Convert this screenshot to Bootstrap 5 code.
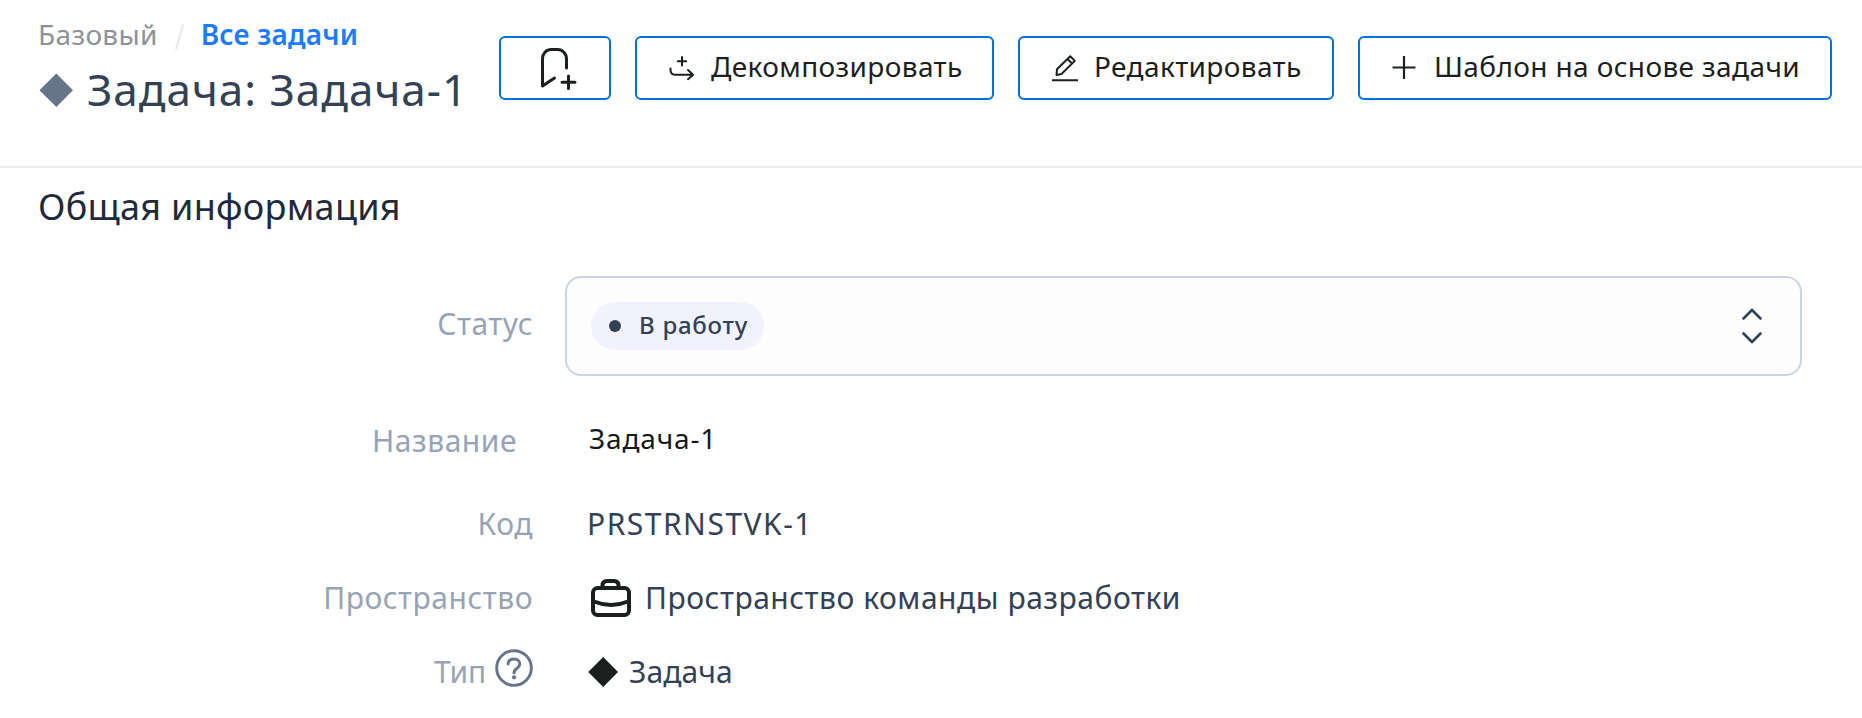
<!DOCTYPE html>
<html lang="ru">
<head>
<meta charset="utf-8">
<meta name="viewport" content="width=device-width, initial-scale=1">
<title>Задача-1</title>
<link href="https://cdn.jsdelivr.net/npm/bootstrap@5.3.0/dist/css/bootstrap.min.css" rel="stylesheet">
<style>
  body { font-family: "Noto Sans", sans-serif; font-size: 30px; line-height: 40px; color: #334155; background: #fff; overflow: hidden; }
  svg { display: block; flex: none; }
  .page-head { height: 168px; padding: 0 30px 0 38px; border-bottom: 2px solid #ececee; }
  .head-titles { padding-top: 20px; width: 461px; }
  .breadcrumb { font-size: 28px; line-height: 28px; letter-spacing: .32px; white-space: nowrap; }
  .crumb-base { color: #8c9299; }
  .crumb-link { color: #1f7aff; font-weight: 600; letter-spacing: .19px; text-decoration: none; }
  .crumb-sep { margin: 4px 17px 0 17px; }
  .task-title { font-size: 44px; line-height: 54px; padding-bottom: 2px; font-weight: 400; letter-spacing: .98px; color: #334155; white-space: nowrap; }
  .head-actions { padding-top: 36px; gap: 24px; }
  .btn-act {
    --bs-btn-color: #1b1f20; --bs-btn-bg: #fff; --bs-btn-border-color: #0070dd; --bs-btn-border-width: 2px;
    --bs-btn-border-radius: 6px; --bs-btn-font-size: 28px; --bs-btn-line-height: 40px;
    --bs-btn-hover-color: #1b1f20; --bs-btn-hover-border-color: #0070dd; --bs-btn-hover-bg: #f2f8ff;
    height: 64px; padding: 0; display: flex; align-items: center; letter-spacing: .38px; white-space: nowrap;
    box-shadow: 0 3px 1px rgba(0,0,0,.015);
  }
  .btn-act span { padding-bottom: 4px; }
  .btn-mark { width: 112px; padding-left: 38px; }
  .btn-split { width: 359px; padding-left: 32px; }
  .btn-edit { width: 316px; padding-left: 32px; }
  .btn-tpl { width: 474px; padding-left: 32px; }
  .section-title { font-size: 36px; line-height: 40px; font-weight: 400; letter-spacing: .28px; color: #1e293b; margin: 19px 0 49px 38px; }
  .field { display: grid; grid-template-columns: 533px 1fr; column-gap: 54px; height: 74px; align-items: center; letter-spacing: .52px; }
  .field-label { color: #98a4b5; text-align: right; }
  .field-value { white-space: nowrap; }
  .field-status { height: 100px; column-gap: 32px; padding-right: 60px; }
  .field-status .field-label { padding-bottom: 5px; }
  .field-name { height: 111px; }
  .field-name .field-label { padding: 18px 16px 0 0; }
  .field-name .field-value { padding: 13px 0 0 2px; font-size: 28px; letter-spacing: .85px; color: #16191c; }
  .field-code .field-value { letter-spacing: 1.5px; }
  .field-type { letter-spacing: .1px; }
  .field-type .field-label { letter-spacing: -.2px; }
  .status-select { height: 100px; padding: 0 37px 0 24px; border: 2px solid #cbd5e1; border-radius: 16px; background: #fdfdfd; }
  .status-pill { width: 173px; height: 48px; padding-left: 18px; border-radius: 24px; background: #f2f2ff; font-size: 24px; line-height: 46px; font-weight: 500; letter-spacing: .75px; white-space: nowrap; }
  .status-text { padding-bottom: 2px; }
  .status-dot { width: 12px; height: 12px; border-radius: 50%; background: #334155; margin-right: 18px; }
</style>
</head>
<body>
<header class="page-head d-flex">
  <div class="head-titles flex-shrink-0">
    <nav aria-label="Навигация">
      <div class="breadcrumb d-flex flex-nowrap m-0">
        <span class="crumb-base">Базовый</span>
        <svg class="crumb-sep" width="9" height="26" viewBox="0 0 9 26"><path d="M8 .5 1 25.5" stroke="#e8eaed" stroke-width="2.4"/></svg>
        <a class="crumb-link" href="#">Все задачи</a>
      </div>
    </nav>
    <div class="d-flex align-items-center mt-2 pt-1">
      <svg width="36" height="36" viewBox="0 0 36 36"><path d="M18.300 1.500 35 18.300 18.300 35 1.500 18.300z" fill="#66758a"/></svg>
      <h1 class="task-title m-0" style="margin-left:13px!important">Задача: Задача-1</h1>
    </div>
  </div>
  <div class="head-actions d-flex flex-shrink-0">
    <button class="btn btn-act btn-mark" aria-label="В закладки">
      <svg width="40" height="46" viewBox="0 0 40 46" fill="none" stroke="#1b1f20" stroke-width="3" stroke-linecap="round" stroke-linejoin="round"><path d="M27.500 23V14C27.500 8.500 23.500 4.500 18.500 4.500H12.500C7 4.500 3.500 8.500 3.500 14V41L15.500 33M29.500 31V43.500M23 37.300H36"/></svg>
    </button>
    <button class="btn btn-act btn-split">
      <svg width="26" height="26" viewBox="0 0 26 26" fill="none" stroke="#1b1f20" stroke-width="2" stroke-linecap="round" stroke-linejoin="round"><path d="M1.500 13.500V15C1.500 18 3 19.700 6 19.700H23.500M19 15 24 19.700 19 24.200M13 2V10.500M8.800 6.300H17.200"/></svg>
      <span class="ms-3">Декомпозировать</span>
    </button>
    <button class="btn btn-act btn-edit">
      <svg width="26" height="28" viewBox="0 0 26 28" fill="none" stroke="#1b1f20" stroke-width="2" stroke-linejoin="round"><path d="M0 26.300H26M4.500 21 5 15.300 18.200 2.300 22.800 6.900 9.500 20zM15.500 5 20 9.500"/></svg>
      <span class="ms-3">Редактировать</span>
    </button>
    <button class="btn btn-act btn-tpl">
      <svg width="24" height="24" viewBox="0 0 24 24" stroke="#1b1f20" stroke-width="2.200"><path d="M12 0V23M.5 11.500H23.500"/></svg>
      <span style="margin-left:18px">Шаблон на основе задачи</span>
    </button>
  </div>
</header>

<main>
  <h2 class="section-title">Общая информация</h2>

  <div class="field field-status">
    <div class="field-label">Статус</div>
    <div class="status-select d-flex align-items-center justify-content-between">
      <span class="status-pill d-flex align-items-center"><span class="status-dot"></span><span class="status-text">В работу</span></span>
      <svg width="22" height="40" viewBox="0 0 22 40" fill="none" stroke="#334155" stroke-width="2.600" stroke-linecap="round" stroke-linejoin="round"><path d="M2.500 12.500 11 4 19.500 12.500M2.500 27.500 11 36 19.500 27.500"/></svg>
    </div>
  </div>

  <div class="field field-name">
    <div class="field-label">Название</div>
    <div class="field-value">Задача-1</div>
  </div>

  <div class="field field-code">
    <div class="field-label">Код</div>
    <div class="field-value">PRSTRNSTVK-1</div>
  </div>

  <div class="field">
    <div class="field-label">Пространство</div>
    <div class="field-value d-flex align-items-center">
      <svg class="ms-1" width="40" height="40" viewBox="0 0 40 40" fill="none" stroke="#1b1f1e" stroke-width="4"><rect x="2" y="10" width="36" height="27" rx="4.500"/><path d="M11.500 10V7.500C11.500 4.500 13 3 16 3H23C26 3 27.500 4.500 27.500 7.500V10M3 23.500Q20 30.500 37 23.500"/></svg>
      <span style="margin-left:14px">Пространство команды разработки</span>
    </div>
  </div>

  <div class="field field-type">
    <div class="field-label d-flex justify-content-end align-items-center">
      <span>Тип</span>
      <svg class="mb-2" style="margin-left:9px" width="38" height="39" viewBox="0 0 39 39" fill="none" stroke="#66758a" stroke-width="3"><circle cx="19.500" cy="19" r="17.800"/><path d="M13.500 15C13.500 11.500 16 9.800 19.500 9.800S25.500 11.800 25.500 15C25.500 19.500 19.500 19 19.500 24" stroke-linecap="round"/><circle cx="19.500" cy="28.500" r="2.200" fill="#66758a" stroke="none"/></svg>
    </div>
    <div class="field-value d-flex align-items-center">
      <svg width="32" height="32" viewBox="0 0 32 32"><path d="M16.200 1 31 16 16.200 31 1.200 16z" fill="#1b1f1e"/></svg>
      <span style="margin-left:10px">Задача</span>
    </div>
  </div>
</main>
<script src="https://cdn.jsdelivr.net/npm/bootstrap@5.3.0/dist/js/bootstrap.bundle.min.js"></script>
</body>
</html>
